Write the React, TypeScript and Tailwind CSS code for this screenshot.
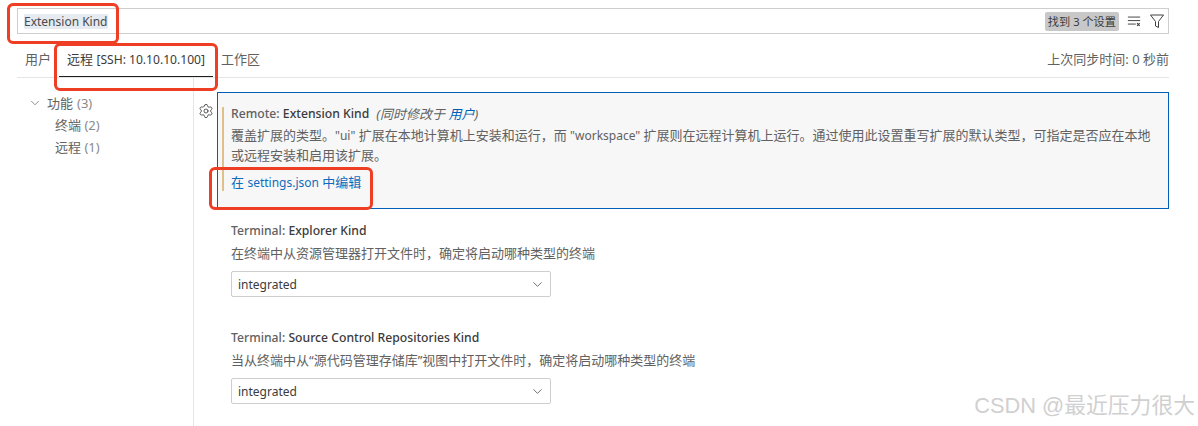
import { ChevronDown, Settings } from 'lucide-react';

const FONT = "font-['Noto_Sans','Noto_Sans_CJK_SC',sans-serif]";

function SelectBox() {
  return (
    <div className="flex h-[26px] w-[320px] items-center justify-between rounded-[2px] border border-[#cecece] pr-[5px] pl-[6px] text-[12px] text-[#3b3b3b]">
      <span className="pt-[2px]">integrated</span>
      <ChevronDown size={15} strokeWidth={1.2} className="text-[#424242]" />
    </div>
  );
}

function SettingBlock({ scope, name, desc }: { scope: string; name: string; desc: string }) {
  return (
    <div className="ml-[37px] flex flex-col">
      <div className="h-[20px] text-[12.2px] leading-[20px] font-medium text-[#3b3b3b]">
        <span className="text-[#616161]">{scope}: </span>
        {name}
      </div>
      <div className="mt-[2px] h-[20px] text-[13px] leading-[20px] text-[#616161]">{desc}</div>
      <div className="mt-[8px]">
        <SelectBox />
      </div>
    </div>
  );
}

function Annotation({ className }: { className: string }) {
  return <div className={`absolute rounded-[6px] border-[3px] border-[#ee3f24] ${className}`} />;
}

export default function App() {
  return (
    <div className={`relative h-[426px] w-[1198px] overflow-hidden bg-white ${FONT}`}>
      <div className="flex h-full flex-col pt-[8px] pr-[29px] pl-[17px]">
        <div className="flex h-[26px] shrink-0 items-center justify-between border border-[#cecece] pr-[3px] pl-[6px]">
          <span className="mt-[1px] bg-[#e5ebf1] text-[12px] leading-[15px] text-[#4a4a4a]">Extension Kind</span>
          <div className="flex items-center gap-[8px]">
            <span className="rounded-[2px] bg-[#c8c8c8] px-[3px] text-[11.2px] leading-[19px] text-[#3b3b3b]">找到 3 个设置</span>
            <svg width="14" height="14" viewBox="0 0 16 16" fill="none" stroke="#424242" strokeWidth="1.100">
              <path d="M1 3.500h14M1 7.500h14M1 11.500h9" />
              <path d="M11.500 10.500l3 3M14.500 10.500l-3 3" strokeWidth="1.300" />
            </svg>
            <svg width="16" height="16" viewBox="0 0 16 16" fill="none" stroke="#424242" strokeWidth="1">
              <path d="M1.500 2h13l-5 6.500v6l-3-1.500v-4.500z" />
            </svg>
          </div>
        </div>

        <div className="flex h-[44px] shrink-0 items-center justify-between border-b border-[#e5e5e5] pt-[9px] text-[13px]">
          <div className="flex h-[34px] items-center self-end">
            <span className="ml-[8px] text-[#616161]">用户</span>
            <div className="ml-[8px] flex h-full items-center border-b border-[#1f1f1f] px-[8px] text-[#3b3b3b]">
              <span>
                远程 <span className="text-[12.1px]">[SSH: 10.10.10.100]</span>
              </span>
            </div>
            <span className="ml-[8px] text-[#616161]">工作区</span>
          </div>
          <span className="text-[#616161]">上次同步时间: 0 秒前</span>
        </div>

        <div className="flex min-h-0 flex-1">
          <div className="w-[177px] shrink-0 border-r border-[#e5e5e5] pt-[14px] text-[13px] leading-[22px] text-[#616161]">
            <div className="flex items-center pl-[11px]">
              <ChevronDown size={14} strokeWidth={1.2} className="mr-[5px] text-[#616161]" />
              功能 <span className="ml-[4px] text-[#8a8a8a]">(3)</span>
            </div>
            <div className="pl-[38px]">
              终端 <span className="text-[#8a8a8a]">(2)</span>
            </div>
            <div className="pl-[38px]">
              远程 <span className="text-[#8a8a8a]">(1)</span>
            </div>
          </div>

          <div className="flex min-w-0 flex-1 flex-col pt-[14px]">
            <div className="relative ml-[23px] h-[117px] border border-[#005fb8] bg-[#f7f7f7] pt-[14px] pl-[4px]">
              <Settings size={16} strokeWidth={1.3} className="absolute top-[10px] left-[-20px] text-[#424242]" />
              <div className="h-[84px] border-l-2 border-[#e0c08a] pl-[7px]">
                <div className="flex h-[15px] items-center text-[12.2px] font-medium text-[#3b3b3b]">
                  <span className="text-[#616161]">Remote:&nbsp;</span>
                  Extension Kind
                  <span className="ml-[7px] text-[13px] font-normal text-[#616161] italic">
                    (同时修改于 <span className="text-[#005fb8]">用户</span>)
                  </span>
                </div>
                <div className="mt-[3px] text-[13px] leading-[20px] text-[#616161]">
                  <div className="h-[20px]">
                    覆盖扩展的类型。<span className="text-[12px] leading-[16px]">"ui"</span> 扩展在本地计算机上安装和运行，而 <span className="text-[12px] leading-[16px]">"workspace"</span> 扩展则在远程计算机上运行。通过使用此设置重写扩展的默认类型，可指定是否应在本地
                  </div>
                  <div className="h-[20px]">或远程安装和启用该扩展。</div>
                </div>
                <div className="mt-[7px] text-[13px] leading-[20px] text-[#0f6cbd]">
                  在 <span className="text-[12px]">settings.json</span> 中编辑
                </div>
              </div>
            </div>

            <div className="mt-[12px]">
              <SettingBlock scope="Terminal" name="Explorer Kind" desc="在终端中从资源管理器打开文件时，确定将启动哪种类型的终端" />
            </div>
            <div className="mt-[31px]">
              <SettingBlock scope="Terminal" name="Source Control Repositories Kind" desc="当从终端中从“源代码管理存储库”视图中打开文件时，确定将启动哪种类型的终端" />
            </div>
          </div>
        </div>
      </div>

      <Annotation className="top-[3px] left-[7px] h-[41px] w-[112px]" />
      <Annotation className="top-[43px] left-[54px] h-[48px] w-[164px]" />
      <Annotation className="top-[167px] left-[209px] h-[43px] w-[164px]" />

      <div className="absolute right-[3px] bottom-[7px] font-['Liberation_Sans','Noto_Sans_CJK_SC',sans-serif] text-[21.8px] leading-[26px] text-[#d0d0d0]">CSDN @最近压力很大</div>
    </div>
  );
}
